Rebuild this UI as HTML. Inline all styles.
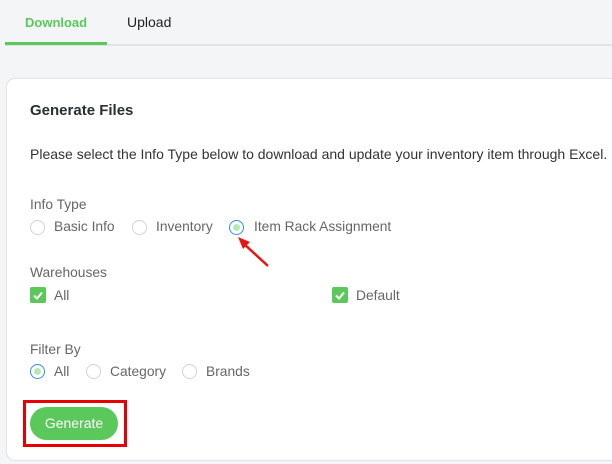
<!DOCTYPE html>
<html><head><style>
body{margin:0;width:612px;height:464px;background:#f4f5f7;font-family:"Liberation Sans",sans-serif;position:relative;overflow:hidden;color:#555}
.a{position:absolute;white-space:nowrap}
.r{position:absolute;width:13px;height:13px;border:1px solid #d3d3d3;border-radius:50%;background:#fff}
.r.on{border-color:#2f8fe6}
.r.on::after{content:"";position:absolute;left:3px;top:3px;width:7px;height:7px;border-radius:50%;background:#b6e8b6}
.c{position:absolute;width:16px;height:16px;background:#5ac85a;border-radius:2px}
.t{font-size:13.8px;color:#666}
</style></head><body>
<div class="a" style="left:25px;top:15px;font-size:13px;color:#5ac85a;font-weight:bold">Download</div>
<div class="a" style="left:127px;top:14px;font-size:14px;color:#222">Upload</div>
<div class="a" style="left:5px;top:44px;width:607px;height:2px;background:#e2e3e5"></div>
<div class="a" style="left:5px;top:42px;width:102px;height:3px;background:#5ac85a"></div>
<div class="a" style="left:6px;top:78px;width:620px;height:381px;background:#fff;border:1px solid #e4e4e4;border-radius:9px"></div>
<div class="a" style="left:30px;top:102px;font-size:15px;font-weight:bold;color:#2a2f33">Generate Files</div>
<div class="a" style="left:30px;top:146px;font-size:14px;color:#333">Please select the Info Type below to download and update your inventory item through Excel.</div>
<div class="a t" style="left:30px;top:197px">Info Type</div>
<div class="r" style="left:30px;top:220px"></div><div class="a t" style="left:54px;top:219px">Basic Info</div>
<div class="r" style="left:132px;top:220px"></div><div class="a t" style="left:156px;top:219px">Inventory</div>
<div class="r on" style="left:229px;top:220px"></div><div class="a t" style="left:254px;top:219px">Item Rack Assignment</div>
<svg class="a" style="left:236px;top:234px" width="36" height="36"><line x1="32" y1="32" x2="7" y2="9" stroke="#e81515" stroke-width="2.5"/><polygon points="2,3 14,8 7,15" fill="#e81515"/></svg>
<div class="a t" style="left:30px;top:265px">Warehouses</div>
<div class="c" style="left:30px;top:287px"></div><svg class="a" style="left:30px;top:287px" width="16" height="16"><path d="M4 8.5l3 3 5-6" stroke="#fff" stroke-width="2" fill="none"/></svg>
<div class="a t" style="left:54px;top:288px">All</div>
<div class="c" style="left:332px;top:287px"></div><svg class="a" style="left:332px;top:287px" width="16" height="16"><path d="M4 8.5l3 3 5-6" stroke="#fff" stroke-width="2" fill="none"/></svg>
<div class="a t" style="left:356px;top:288px">Default</div>
<div class="a t" style="left:30px;top:342px">Filter By</div>
<div class="r on" style="left:30px;top:364px"></div><div class="a t" style="left:54px;top:364px">All</div>
<div class="r" style="left:86px;top:364px"></div><div class="a t" style="left:110px;top:364px">Category</div>
<div class="r" style="left:182px;top:364px"></div><div class="a t" style="left:206px;top:364px">Brands</div>
<div class="a" style="left:23px;top:400px;width:98px;height:41px;border:3px solid #e80000"></div>
<div class="a" style="left:30px;top:407px;width:88px;height:33px;border-radius:17px;background:#5ac85a;color:#fff;font-size:14px;text-align:center;line-height:33px">Generate</div>
</body></html>
